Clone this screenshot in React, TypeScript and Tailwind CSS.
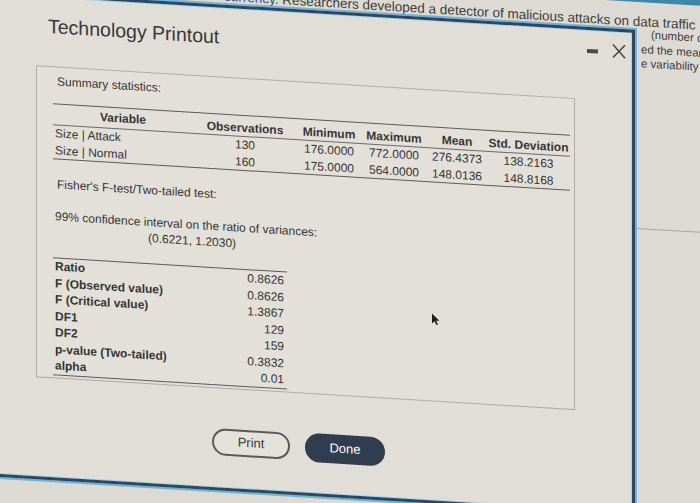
import React from "react";

const summaryRows = [
  { v: "Size | Attack", obs: "130", min: "176.0000", max: "772.0000", mean: "276.4373", sd: "138.2163" },
  { v: "Size | Normal", obs: "160", min: "175.0000", max: "564.0000", mean: "148.0136", sd: "148.8168" },
];

const testRows = [
  ["Ratio", "0.8626"],
  ["F (Observed value)", "0.8626"],
  ["F (Critical value)", "1.3867"],
  ["DF1", "129"],
  ["DF2", "159"],
  ["p-value (Two-tailed)", "0.3832"],
  ["alpha", "0.01"],
];

export default function App() {
  return (
    <div className="w-[700px] h-[503px] overflow-hidden bg-[#d9d7d0] font-['Liberation_Sans',Arial,sans-serif] text-[#353535]">
      <div className="relative -mt-[50px] w-[760px] h-[640px] origin-top-left skew-y-[3.5deg] bg-[#dddad3]">
        {/* background page */}
        <div className="h-[13px] bg-[#3f86ab]" />
        <div className="pl-[224px] pt-[12px] text-[13.5px] leading-[16px] whitespace-nowrap text-[#3a3a3a]">
          <span className="text-[#2a587c]">currency.</span> Researchers developed a detector of malicious attacks on data traffic
        </div>
        <div className="-mt-[3px] pl-[641px] text-[11.5px] leading-[14.5px] whitespace-nowrap text-[#3a3a3a]">
          <div className="pl-[10px]">(number of packets)</div>
          <div>ed the mean</div>
          <div>e variability of</div>
        </div>
        <div className="mt-[157px] ml-[632px] h-px w-[130px] bg-[#a9a6a0]" />

        {/* dialog */}
        <div className="absolute left-[-20px] top-[41px] w-[655px] h-[486px] border-[3px] border-[#284866] bg-[#e1ded7] shadow-[0_0_0_2px_#74b2d3,inset_0_0_0_1px_#a9d3e7]">
          <div className="flex items-start pl-[65px] pr-[6px] pt-[11px]">
            <div className="mt-[6px] text-[19.5px] leading-[24px] text-[#383838]">Technology Printout</div>
            <div className="ml-auto flex h-[16px] items-center gap-[14px]">
              <span className="mt-[4px] block h-[3.5px] w-[11px] bg-[#4a4a4a]" />
              <svg width="14" height="15" viewBox="0 0 14 15" fill="none" stroke="#474747" strokeWidth="1.5">
                <path d="M1 1 L13 14 M13 1 L1 14" />
              </svg>
            </div>
          </div>

          <div className="ml-[53px] mt-[28px] w-[539px] border border-[#aeaca6] bg-[#e3e0d9] pb-[2px] text-[12px]">
            <div className="pl-[20px] pt-[6px] leading-[16px]">Summary statistics:</div>

            <div className="ml-[16px] mt-[14px] w-[517px] border-t-[1.5px] border-b-[1.5px] border-[#5a5a5a]">
              <div className="flex h-[21px] items-end border-b border-[#6a6a6a] pb-[1px] font-bold leading-[14px]">
                <div className="mb-[2px] w-[140px] text-center">Variable</div>
                <div className="w-[104px] text-center">Observations</div>
                <div className="w-[64px] text-center">Minimum</div>
                <div className="w-[66px] text-center">Maximum</div>
                <div className="w-[60px] text-center">Mean</div>
                <div className="w-[83px] text-center">Std. Deviation</div>
              </div>
              {summaryRows.map((r) => (
                <div key={r.v} className="flex h-[16.5px] items-center leading-[14px]">
                  <div className="w-[140px] pl-[2px]">{r.v}</div>
                  <div className="w-[104px] text-center">{r.obs}</div>
                  <div className="w-[64px] text-center">{r.min}</div>
                  <div className="w-[66px] text-center">{r.max}</div>
                  <div className="w-[60px] text-center">{r.mean}</div>
                  <div className="w-[83px] text-center">{r.sd}</div>
                </div>
              ))}
            </div>

            <div className="mt-[17px] pl-[20px] leading-[16px]">Fisher's F-test/Two-tailed test:</div>
            <div className="mt-[16px] pl-[18px] leading-[16px]">99% confidence interval on the ratio of variances:</div>
            <div className="pl-[111px] leading-[16px]">(0.6221, 1.2030)</div>

            <div className="ml-[16px] mt-[17px] w-[234px] border-t-[1.5px] border-b-[1.5px] border-[#5a5a5a]">
              {testRows.map(([k, v]) => (
                <div key={k} className="flex h-[16.5px] items-center justify-between pl-[2px] pr-[3px] leading-[14px]">
                  <span className="font-bold">{k}</span>
                  <span>{v}</span>
                </div>
              ))}
            </div>
          </div>

          <div className="mt-[39px] flex items-center gap-[15px] pl-[229px]">
            <button className="flex h-[27px] w-[78px] items-center justify-center rounded-full border-[2px] border-[#5a5a5a] bg-[#e5e2db] text-[13px] text-[#383838]">
              Print
            </button>
            <button className="flex h-[29px] w-[80px] items-center justify-center rounded-full bg-[#2f3d4f] text-[13px] text-white">
              Done
            </button>
          </div>

          {/* mouse pointer */}
          <svg className="absolute left-[448px] top-[292px]" width="9" height="13" viewBox="0 0 9 13">
            <path d="M1 1 L1 11 L3.5 8.6 L5.4 12.4 L7 11.7 L5.1 8 L8.4 8 Z" fill="#1f1f1f" />
          </svg>
        </div>
      </div>
    </div>
  );
}
